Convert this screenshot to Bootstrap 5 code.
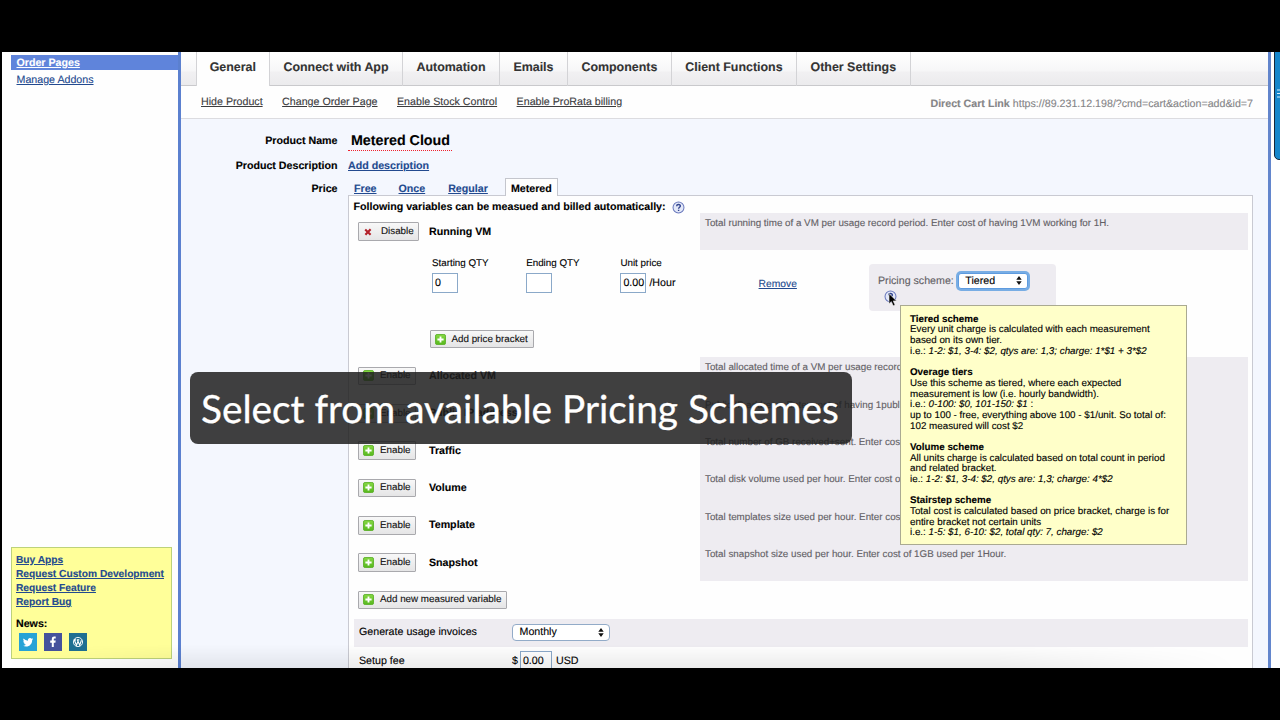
<!DOCTYPE html>
<html lang="en">
<head>
<meta charset="utf-8">
<title>Product configuration</title>
<link href="https://cdn.jsdelivr.net/npm/bootstrap@5.3.0/dist/css/bootstrap.min.css" rel="stylesheet">
<style>
body{background:#000;width:1280px;height:720px;padding-top:52px;overflow:hidden;font-family:"Liberation Sans",Arial,sans-serif;font-size:10.67px;line-height:14.2px;color:#000;text-rendering:geometricPrecision;-webkit-text-stroke:.12px}
a{color:#234a8f}
.screen{height:616px;background:#fefefe;overflow:hidden}
.side{width:181px;border-left:2px solid #000;border-right:3px solid #5b80cf;padding:3px 0 9px 9px}
.side-current{background:#5f84db;height:15px;padding:.6px 0 0 5.5px}
.side-current a{color:#fff}
.side-item{padding:3.2px 0 0 5.5px}
.help-box{width:161px;height:112px;background:#ffff99;border:1px solid #bdd27a;padding:5.6px 4px;font-size:10.21px}
.help-box .news-title{margin-top:7px;font-size:10.67px;color:#000}
.social{gap:7px;margin:1px 0 0 3px}
.workarea{width:1087px;background:#f4f7fe}
.tabs{height:34px;padding-left:14.5px;border-bottom:1px solid #c9c9cc;background:linear-gradient(#fff,#f7f7f8 55%,#f1f0f2 62%,#ebebed);font-size:12.43px;font-weight:bold}
.tabs a{color:#333;text-decoration:none;height:34px;padding:0 13.48px 3px;border-right:1px solid #d3d3d6}
.tabs a.active{background:#fefefe;border-left:1px solid #d3d3d6;padding-left:13.2px;padding-right:13px}
.subbar{height:33px;background:#fefefe;border-bottom:1px solid #dcdce0;padding:0 15px 0 20px}
.subbar a{color:#3c3c3e}
.subbar .actions{gap:19.5px}
.cart{color:#858587;padding-top:4px}
.form-line{height:25px;font-weight:bold}
.form-label-cell{width:156.5px;text-align:right;margin-right:10.5px;flex:none}
.prod{font-size:14.25px;height:19px;line-height:18px;border-bottom:1px dotted #f0202c;padding:0 2.5px 0 3px}
.price-line{margin-top:1px;height:17px}
.price-line>.form-label-cell,.price-tabs>a{padding-top:3.5px}
.price-tabs{height:17px;padding-left:6px}
.tab-a{margin-right:22px}
.tab-b{margin-right:23px}
.tab-c{margin-right:17px}
.price-tabs .current{position:relative;z-index:1;background:#fefefe;border:1px solid #c4c6cd;border-bottom:0;height:18px;width:53px;padding-top:2.5px;text-align:center}
.panel{width:905px;height:480px;margin-left:167px;border:1px solid #c9cad2;background:#fefefe;padding:0 4px 0 4.5px;position:relative}
.intro{height:17px;font-weight:bold;padding-top:5px;gap:6px}
.var-row{height:37.33px}
.var-left{width:346.5px;padding-left:4.5px;flex:none}
.var-row .desc{background:#eeecf1;flex:1;padding:4px 5px 0;color:#626065;font-size:9.81px;white-space:nowrap}
.plain-btn{height:18.5px;border:1px solid #a9a9ad;border-radius:1px;background:linear-gradient(#f8f8f8,#e5e5e6);font-size:9.8px;line-height:17px;color:#111;padding:0 4px;gap:6px;white-space:nowrap}
.var-left .plain-btn{margin-right:13px}
.plain-btn.w-en{width:58px}
.plain-btn.w-dis{width:61px;margin-right:10px}
.plain-btn.w-wide{width:148.5px}
.x-ico{margin:0 3px 0 1px}
.var-name{font-weight:bold}
.bracket{height:107px;padding-left:78.5px;position:relative}
.fields{font-size:9.8px;padding-top:6.4px}
.fields .cell{width:94.2px}
.box-in{width:26px;height:20px;border:1px solid #8ba9c9;background:#fff;font-size:10.67px;line-height:18px;padding-left:2px;margin-top:2.4px}
.unit{gap:3px;font-size:10.67px}
.unit>span{padding-top:2.5px}
.remove{padding:21.5px 0 0 44px;font-size:10.3px}
.add-bracket{position:relative;margin-left:-2.5px;margin-top:36.5px;width:104.5px}
.scheme{position:absolute;left:515.5px;top:14px;width:187px;height:46.5px;background:#eeecf1;border-radius:4px;color:#626065;padding:8.5px 0 0 9px}
.scheme-help{margin:1px 0 0 6px}
.sel{background:#fff;color:#000;height:16px;border-radius:3px;padding:0 5px 0 6.5px}
.sel.focus-on{width:70px;margin-left:4px;box-shadow:0 0 0 2px #78ade4;border:1px solid #5e9bdf}
.sel.month{width:97.5px;border:1px solid #92abc8;height:17px;border-radius:4px}
.gen{height:28px;background:#eeecf1;padding:0 0 .5px 5.5px}
.gen .lbl,.setup .lbl{width:153px}
.setup{height:28px;padding:1px 0 0 5.5px}
.fee{width:32px;margin:0 4px 0 2px}
.right-rule{width:3px;background:#6285cc;flex:none}
.tip{position:absolute;left:900px;top:305px;width:287px;height:240px;background:#ffffc9;border:1px solid #aaaa92;padding:8.8px 9px 0;font-size:9.81px;line-height:10.67px;white-space:nowrap}
.caption-bar{position:absolute;left:190px;top:372px;width:662px;height:72px;border-radius:8px;background:rgba(30,30,30,.85);color:#fff;font:38.8px/74px Lato,sans-serif;padding-left:11px;white-space:nowrap;-webkit-text-stroke:.3px}
.shade{position:absolute;left:0;top:644px;width:1245px;height:24px;background:linear-gradient(90deg,rgba(0,0,0,0) 0,#000 15%,#000 80%,rgba(0,0,0,0));-webkit-mask-image:linear-gradient(transparent,#000);opacity:.07}
.dock{position:absolute;left:1274px;top:44px;width:20px;height:116px;background:#1686cb;border:1.5px solid #14263a;border-radius:5px}
.dock-lines{margin:44px 0 0 2px}
.ceiling{position:absolute;left:0;top:0;width:1280px;height:52px;background:#000}
.pointer{position:absolute;left:888px;top:293px}
</style>
<script src="https://cdn.jsdelivr.net/npm/bootstrap@5.3.0/dist/js/bootstrap.bundle.min.js"></script>
</head>
<body>
<svg width="0" height="0" class="position-absolute">
  <defs>
    <linearGradient id="gg" x2="0" y2="1"><stop stop-color="#86d843"/><stop offset="1" stop-color="#57b81e"/></linearGradient>
    <symbol id="plus" viewBox="0 0 12 12"><rect x=".5" y=".5" width="11" height="11" rx="1.8" fill="url(#gg)" stroke="#5cb02a"/><path d="M6 2.6v6.8M2.6 6h6.8" stroke="#fff" stroke-width="2"/></symbol>
    <symbol id="cross" viewBox="0 0 8 8"><path d="M1.2 1.5 6.6 6.8M6.6 1.2 1.4 6.8" stroke="#b3202a" stroke-width="2.1"/></symbol>
    <symbol id="help" viewBox="0 0 14 14"><circle cx="7" cy="7" r="5.9" fill="#e3e8f8" stroke="#6a79bd" stroke-width="1.1"/><path d="M5 5.6C5 3.2 9 3.3 9 5.4 9 6.8 7.1 6.7 7.1 8.3M7.1 9.3v1.6" fill="none" stroke="#33458e" stroke-width="1.5"/></symbol>
    <symbol id="updown" viewBox="0 0 6 9"><path d="M3 0 5.7 3.7H.3zM3 9 .3 5.3h5.4z" fill="#111"/></symbol>
  </defs>
</svg>

<div class="screen d-flex">
  <aside class="side d-flex flex-column flex-shrink-0">
    <div class="side-current fw-bold"><a href="#">Order Pages</a></div>
    <div class="side-item"><a href="#">Manage Addons</a></div>
    <div class="help-box mt-auto fw-bold text-nowrap">
      <div><a href="#">Buy Apps</a></div>
      <div><a href="#">Request Custom Development</a></div>
      <div><a href="#">Request Feature</a></div>
      <div><a href="#">Report Bug</a></div>
      <div class="news-title">News:</div>
      <div class="social d-flex">
        <svg width="18" height="18" viewBox="0 0 18 18"><path fill="#27a3d6" d="M0 0h18v18H0z"/><path fill="#fff" transform="translate(3.8 3.8) scale(.65)" d="M5.026 15c6.038 0 9.341-5.003 9.341-9.334 0-.14 0-.282-.006-.422A6.685 6.685 0 0 0 16 3.542a6.658 6.658 0 0 1-1.889.518 3.301 3.301 0 0 0 1.447-1.817 6.533 6.533 0 0 1-2.087.793A3.286 3.286 0 0 0 7.875 6.03a9.325 9.325 0 0 1-6.767-3.429 3.289 3.289 0 0 0 1.018 4.382A3.323 3.323 0 0 1 .64 6.575v.045a3.288 3.288 0 0 0 2.632 3.218 3.203 3.203 0 0 1-.865.115 3.23 3.23 0 0 1-.614-.057 3.283 3.283 0 0 0 3.067 2.277A6.588 6.588 0 0 1 .78 13.58a6.32 6.32 0 0 1-.78-.045A9.344 9.344 0 0 0 5.026 15z"/></svg>
        <svg width="18" height="18" viewBox="0 0 18 18"><path fill="#45529c" d="M0 0h18v18H0z"/><path fill="#fff" d="M7.8 14V9.7H6.2V7.5h1.6V6.2c0-1.9 1-2.6 2.4-2.6h1.5v2h-1c-.7 0-.9.3-.9.8v1.1h1.9l-.3 2.2H9.8V14z"/></svg>
        <svg width="18" height="18" viewBox="0 0 18 18"><path fill="#1f6f92" d="M0 0h18v18H0z"/><circle cx="9" cy="9" r="4.6" fill="none" stroke="#fff" stroke-width=".9"/><path d="M5.3 7 7.5 12.3 9 8.2l1.7 4.1 1.7-5M4.9 6.9h2.2M7.9 6.9h2.4M8.4 6.9 9.2 9" fill="none" stroke="#fff" stroke-width="1.1"/></svg>
      </div>
    </div>
  </aside>

  <main class="workarea flex-shrink-0">
    <nav class="tabs d-flex">
      <a href="#" class="active d-flex align-items-center">General</a>
      <a href="#" class="d-flex align-items-center">Connect with App</a>
      <a href="#" class="d-flex align-items-center">Automation</a>
      <a href="#" class="d-flex align-items-center">Emails</a>
      <a href="#" class="d-flex align-items-center">Components</a>
      <a href="#" class="d-flex align-items-center">Client Functions</a>
      <a href="#" class="d-flex align-items-center">Other Settings</a>
    </nav>
    <div class="subbar d-flex justify-content-between align-items-center">
      <div class="actions d-flex"><a href="#">Hide Product</a><a href="#">Change Order Page</a><a href="#">Enable Stock Control</a><a href="#">Enable ProRata billing</a></div>
      <div class="cart"><b>Direct Cart Link</b> https://89.231.12.198/?cmd=cart&amp;action=add&amp;id=7</div>
    </div>

    <div class="form-line d-flex align-items-center mt-2 pt-1"><div class="form-label-cell">Product Name</div><div class="prod">Metered Cloud</div></div>
    <div class="form-line d-flex align-items-center pt-1"><div class="form-label-cell">Product Description</div><a href="#">Add description</a></div>
    <div class="d-flex fw-bold price-line">
      <div class="form-label-cell">Price</div>
      <div class="price-tabs d-flex">
        <a href="#" class="tab-a">Free</a><a href="#" class="tab-b">Once</a><a href="#" class="tab-c">Regular</a><span class="current">Metered</span>
      </div>
    </div>

    <section class="panel">
      <div class="intro d-flex align-items-center"><span>Following variables can be measued and billed automatically:</span><svg width="13" height="13"><use href="#help"/></svg></div>
      <div class="var-row d-flex">
        <div class="var-left d-flex align-items-center"><span class="plain-btn w-dis d-flex align-items-center"><svg class="x-ico" width="8" height="8"><use href="#cross"/></svg>Disable</span><span class="var-name">Running VM</span></div>
        <div class="desc">Total running time of a VM per usage record period. Enter cost of having 1VM working for 1H.</div>
      </div>
      <div class="bracket">
        <div class="fields d-flex">
          <div class="cell">Starting QTY<div class="box-in">0</div></div>
          <div class="cell">Ending QTY<div class="box-in"></div></div>
          <div class="cell">Unit price<div class="d-flex align-items-center unit"><div class="box-in">0.00</div><span>/Hour</span></div></div>
          <div class="remove"><a href="#">Remove</a></div>
        </div>
        <span class="plain-btn add-bracket d-flex align-items-center"><svg width="11" height="11"><use href="#plus"/></svg>Add price bracket</span>
        <div class="scheme">
          <div class="d-flex align-items-center text-nowrap">Pricing scheme:<span class="sel focus-on d-flex align-items-center justify-content-between">Tiered<svg width="6" height="9"><use href="#updown"/></svg></span></div>
          <svg class="scheme-help d-block" width="13" height="13"><use href="#help"/></svg>
        </div>
      </div>
      <div class="var-row d-flex"><div class="var-left d-flex align-items-center"><span class="plain-btn w-en d-flex align-items-center"><svg width="11" height="11"><use href="#plus"/></svg>Enable</span><span class="var-name">Allocated VM</span></div><div class="desc">Total allocated time of a VM per usage record</div></div>
      <div class="var-row d-flex"><div class="var-left d-flex align-items-center"><span class="plain-btn w-en d-flex align-items-center"><svg width="11" height="11"><use href="#plus"/></svg>Enable</span><span class="var-name">Public IP address</span></div><div class="desc">Public IP address. Enter cost of having 1public</div></div>
      <div class="var-row d-flex"><div class="var-left d-flex align-items-center"><span class="plain-btn w-en d-flex align-items-center"><svg width="11" height="11"><use href="#plus"/></svg>Enable</span><span class="var-name">Traffic</span></div><div class="desc">Total number of GB received+sent. Enter cost</div></div>
      <div class="var-row d-flex"><div class="var-left d-flex align-items-center"><span class="plain-btn w-en d-flex align-items-center"><svg width="11" height="11"><use href="#plus"/></svg>Enable</span><span class="var-name">Volume</span></div><div class="desc">Total disk volume used per hour. Enter cost of</div></div>
      <div class="var-row d-flex"><div class="var-left d-flex align-items-center"><span class="plain-btn w-en d-flex align-items-center"><svg width="11" height="11"><use href="#plus"/></svg>Enable</span><span class="var-name">Template</span></div><div class="desc">Total templates size used per hour. Enter cost</div></div>
      <div class="var-row d-flex"><div class="var-left d-flex align-items-center"><span class="plain-btn w-en d-flex align-items-center"><svg width="11" height="11"><use href="#plus"/></svg>Enable</span><span class="var-name">Snapshot</span></div><div class="desc">Total snapshot size used per hour. Enter cost of 1GB used per 1Hour.</div></div>
      <div class="var-row d-flex"><div class="var-left d-flex align-items-center"><span class="plain-btn w-wide d-flex align-items-center"><svg width="11" height="11"><use href="#plus"/></svg>Add new measured variable</span></div></div>
      <div class="gen d-flex align-items-center"><span class="lbl">Generate usage invoices</span><span class="sel month d-flex align-items-center justify-content-between">Monthly<svg width="6" height="9"><use href="#updown"/></svg></span></div>
      <div class="setup d-flex align-items-center"><span class="lbl">Setup fee</span>$<span class="box-in fee">0.00</span>USD</div>
    </section>
  </main>
  <div class="right-rule"></div>
</div>

<div class="tip">
  <b>Tiered scheme</b><br>Every unit charge is calculated with each measurement<br>based on its own tier.<br>i.e.: <i>1-2: $1, 3-4: $2, qtys are: 1,3; charge: 1*$1 + 3*$2</i><br><br>
  <b>Overage tiers</b><br>Use this scheme as tiered, where each expected<br>measurement is low (i.e. hourly bandwidth).<br>i.e.: <i>0-100: $0, 101-150: $1</i> :<br>up to 100 - free, everything above 100 - $1/unit. So total of:<br>102 measured will cost $2<br><br>
  <b>Volume scheme</b><br>All units charge is calculated based on total count in period<br>and related bracket.<br>ie.: <i>1-2: $1, 3-4: $2, qtys are: 1,3; charge: 4*$2</i><br><br>
  <b>Stairstep scheme</b><br>Total cost is calculated based on price bracket, charge is for<br>entire bracket not certain units<br>i.e.: <i>1-5: $1, 6-10: $2, total qty: 7, charge: $2</i>
</div>
<div class="caption-bar">Select from available Pricing Schemes</div>
<svg class="pointer" width="10" height="14" viewBox="0 0 10 14"><path d="M1 .6v10.2l2.3-2.2 1.9 4.2 1.9-.8-1.9-4.1h3.3z" fill="#000" stroke="#eee" stroke-width=".6"/></svg>
<div class="shade"></div>
<div class="dock"><svg class="d-block dock-lines" width="6" height="9"><path d="M0 1h6M0 4.500h6M0 8h6" stroke="#d5ecfa"/></svg></div>
<div class="ceiling"></div>
</body>
</html>
